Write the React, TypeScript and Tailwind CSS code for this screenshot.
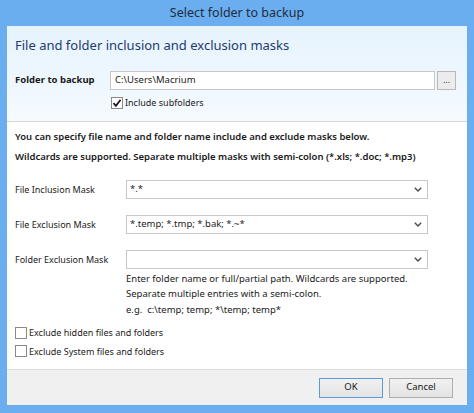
import React from 'react';

const font = { fontFamily: '"Noto Sans", "Open Sans", sans-serif' };

function Chevron() {
  return (
    <svg width="8" height="5" viewBox="0 0 8 5" className="text-[#4d4d4d]">
      <path d="M0.8 0.8 L4 4 L7.2 0.8" fill="none" stroke="currentColor" strokeWidth="1.4" />
    </svg>
  );
}

function Combo({ value }: { value: string }) {
  return (
    <div className="ml-[119px] w-[302px] h-[19px] border border-[#c7c7c7] bg-white flex items-center justify-between pl-[3px] pr-[5px]">
      <span className="text-[9.5px] text-[#1a1a1a]">{value}</span>
      <Chevron />
    </div>
  );
}

function CheckBox({ checked }: { checked?: boolean }) {
  return (
    <div className="w-[12px] h-[12px] border border-[#8a8a8a] bg-white flex items-center justify-center shrink-0">
      {checked && (
        <svg width="10" height="10" viewBox="0 0 10 10">
          <path d="M1.5 5.2 L3.9 7.8 L8.6 1.8" fill="none" stroke="#1a1a1a" strokeWidth="1.8" />
        </svg>
      )}
    </div>
  );
}

export default function App() {
  return (
    <div className="w-[474px] h-[413px] bg-[#6aaef0] flex flex-col" style={font}>
      {/* Title bar */}
      <div className="h-[26px] flex items-center justify-center text-[12.5px] text-[#1f2d3d]">
        Select folder to backup
      </div>

      <div className="mx-[7px] mb-[8px] flex-1 bg-white flex flex-col">
        {/* Top section */}
        <div className="h-[96px] bg-gradient-to-b from-[#e6f3fd] to-[#f5faff] border-b border-[#d6d6d6] flex flex-col">
          <div className="h-[40px] flex items-center pl-[8px] text-[13px] text-[#1e3a6e]">
            File and folder inclusion and exclusion masks
          </div>
          <div className="mt-[5px] h-[19px] flex items-center">
            <span className="w-[103px] pl-[8px] text-[9.5px] font-bold text-[#1a1a1a]">Folder to backup</span>
            <div className="w-[325px] h-[19px] border border-[#c7c7c7] bg-white flex items-center pl-[4px] text-[9.5px] text-[#1a1a1a]">
              C:\Users\Macrium
            </div>
            <div className="ml-[2px] w-[19px] h-[19px] border border-[#b8b8b8] bg-[#ececec] flex items-center justify-center text-[9px] leading-none text-[#333] pb-[2px]">
              ...
            </div>
          </div>
          <div className="mt-[6px] h-[14px] flex items-center gap-[2px] pl-[104px]">
            <CheckBox checked />
            <span className="text-[9px] text-[#1a1a1a]">Include subfolders</span>
          </div>
        </div>

        {/* Mask section */}
        <div className="flex-1 flex flex-col text-[#1a1a1a]">
          <div className="pt-[5px] pl-[8px] text-[9.5px] font-semibold leading-[20px]">
            <div>You can specify file name and folder name include and exclude masks below.</div>
            <div>Wildcards are supported. Separate multiple masks with semi-colon (*.xls; *.doc; *.mp3)</div>
          </div>

          <div className="mt-[13px] relative flex items-center">
            <span className="absolute left-[8px] text-[9px]">File Inclusion Mask</span>
            <Combo value="*.*" />
          </div>
          <div className="mt-[16px] relative flex items-center">
            <span className="absolute left-[8px] text-[9px]">File Exclusion Mask</span>
            <Combo value="*.temp; *.tmp; *.bak; *.~*" />
          </div>
          <div className="mt-[16px] relative flex items-center">
            <span className="absolute left-[8px] text-[9px]">Folder Exclusion Mask</span>
            <Combo value="" />
          </div>
          <div className="ml-[119px] mt-[2px] text-[9.5px] leading-[15px]">
            <div>Enter folder name or full/partial path. Wildcards are supported.</div>
            <div>Separate multiple entries with a semi-colon.</div>
            <div className="mt-[1px]">e.g.&nbsp; c:\temp; temp; *\temp; temp*</div>
          </div>

          <div className="mt-[9px] pl-[8px] flex flex-col gap-[5px]">
            <div className="flex items-center gap-[2px]">
              <CheckBox />
              <span className="text-[9px]">Exclude hidden files and folders</span>
            </div>
            <div className="flex items-center gap-[2px]">
              <CheckBox />
              <span className="text-[9px]">Exclude System files and folders</span>
            </div>
          </div>
        </div>

        {/* Footer */}
        <div className="h-[36px] border-t border-[#dcdcdc] bg-[#f0f0f0] flex items-center justify-end gap-[6px] pr-[14px]">
          <div className="w-[64px] h-[20px] border border-[#5b9ad6] bg-gradient-to-b from-[#f1f1f1] to-[#e3e3e3] flex items-center justify-center text-[9.5px] text-[#1a1a1a]">
            OK
          </div>
          <div className="w-[64px] h-[20px] border border-[#adadad] bg-gradient-to-b from-[#f1f1f1] to-[#e3e3e3] flex items-center justify-center text-[9.5px] text-[#1a1a1a]">
            Cancel
          </div>
        </div>
      </div>
    </div>
  );
}
